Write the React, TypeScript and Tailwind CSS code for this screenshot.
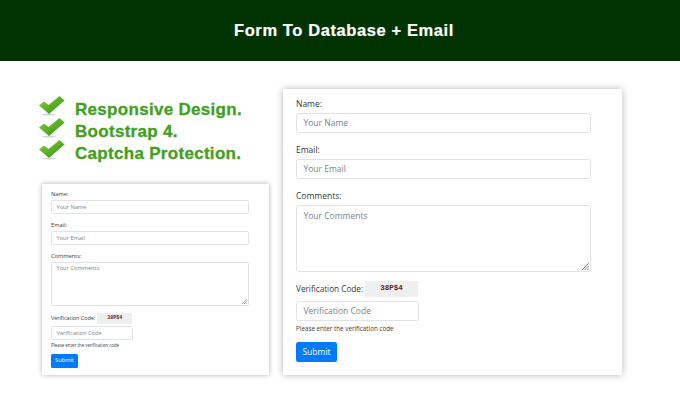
const variants = {
  large: {
    card: 'w-[339px] h-[286px] px-[13px] pt-[7px] shadow-[0_0_7px_rgba(0,0,0,0.3)]',
    text: 'text-[8.5px]',
    label: 'h-[17px] leading-[15px]',
    input: 'h-[20px] rounded-[2.5px] px-[6.5px]',
    wide: 'w-[295px]',
    gap: 'mb-[9px]',
    area: 'h-[67px] pt-[6px]',
    code: 'w-[53px] h-[16px] ml-[2px] text-[7.5px]',
    row: 'mt-[9px] mb-[4px] h-[16px] text-[8.2px]',
    codeInput: 'w-[123px]',
    help: 'mt-[2px] h-[12px] text-[6.3px] leading-[12px]',
    button: 'mt-[7px] w-[41px] h-[20px] rounded-[2.5px]',
    grip: 'w-[7px] h-[7px]',
  },
  small: {
    card: 'w-[227px] h-[191px] px-[9px] pt-[5px] shadow-[0_0_5px_rgba(0,0,0,0.3)]',
    text: 'text-[5.7px]',
    label: 'h-[11px] leading-[10px]',
    input: 'h-[14px] rounded-[1.5px] px-[4.5px]',
    wide: 'w-[197.5px]',
    gap: 'mb-[6px]',
    area: 'h-[44px] pt-[3px]',
    code: 'w-[35px] h-[11px] ml-[2px] text-[5px]',
    row: 'mt-[7px] mb-[2px] h-[11px] text-[5.4px]',
    codeInput: 'w-[82px]',
    help: 'mt-[1px] h-[8px] text-[4.4px] leading-[8px]',
    button: 'mt-[5px] w-[27px] h-[13.5px] rounded-[1.5px]',
    grip: 'w-[5px] h-[5px]',
  },
}

function FormCard({ size }: { size: 'large' | 'small' }) {
  const v = variants[size]
  const field = `border border-[#dfe3e7] bg-white text-[#7b838a] ${v.input}`

  return (
    <div className={`bg-white text-[#343a40] font-['Open_Sans',sans-serif] ${v.text} ${v.card}`}>
      <div className={v.label}>Name:</div>
      <div className={`flex items-center ${field} ${v.wide} ${v.gap}`}>Your Name</div>
      <div className={v.label}>Email:</div>
      <div className={`flex items-center ${field} ${v.wide} ${v.gap}`}>Your Email</div>
      <div className={v.label}>Comments:</div>
      <div className={`relative ${field} ${v.wide} ${v.area} leading-none`}>
        Your Comments
        <svg viewBox="0 0 8 8" className={`absolute right-[1px] bottom-[1px] ${v.grip}`}>
          <path d="M8 0 0 8M8 3 3 8M8 6 6 8" stroke="#777" strokeWidth="1" />
        </svg>
      </div>
      <div className={`flex items-center leading-none ${v.row}`}>
        <span>Verification Code:</span>
        <span className={`flex items-center justify-center bg-[#efefef] font-bold text-[#5c1f1f] font-['Liberation_Mono',monospace] ${v.code}`}>
          38P$4
        </span>
      </div>
      <div className={`flex items-center ${field} ${v.codeInput}`}>Verification Code</div>
      <div className={v.help}>Please enter the verification code</div>
      <div className={`flex items-center justify-center bg-[#007bff] text-white ${v.button}`}>Submit</div>
    </div>
  )
}

function Check() {
  return (
    <svg viewBox="0 0 26 20" className="w-[26px] h-[20px] shrink-0">
      <defs>
        <linearGradient id="chk" x1="0" y1="0" x2="1" y2="1">
          <stop offset="0" stopColor="#8ccf3c" />
          <stop offset="1" stopColor="#2f8f12" />
        </linearGradient>
      </defs>
      <ellipse cx="10" cy="18.6" rx="7" ry="1" fill="#d4d4d4" />
      <path d="M0 9.5 5 5.5 9.5 9 20.5 0 25.5 4.5 10 18Z" fill="url(#chk)" />
    </svg>
  )
}

export default function App() {
  const features = ['Responsive Design.', 'Bootstrap 4.', 'Captcha Protection.']

  return (
    <div className="w-[680px] h-[409px] overflow-hidden bg-white font-['Liberation_Sans',sans-serif]">
      <div className="flex h-[61px] items-center justify-center bg-[#003300] pl-[8px] text-[16.5px] font-bold tracking-[0.6px] text-white [-webkit-text-stroke:0.2px_white]">
        Form To Database + Email
      </div>
      <div className="flex pt-[28px]">
        <div className="w-[243px] ml-[39px] pt-[7px]">
          <div className="flex flex-col">
            {features.map((f) => (
              <div key={f} className="flex h-[22px] items-start">
                <Check />
                <span className="ml-[10px] mt-[3px] text-[17px] font-bold leading-[22px] tracking-[0.3px] text-[#43a01c] [-webkit-text-stroke:0.3px_#43a01c]">
                  {f}
                </span>
              </div>
            ))}
          </div>
          <div className="mt-[22px] ml-[3px]">
            <FormCard size="small" />
          </div>
        </div>
        <div className="ml-[1px]">
          <FormCard size="large" />
        </div>
      </div>
    </div>
  )
}
